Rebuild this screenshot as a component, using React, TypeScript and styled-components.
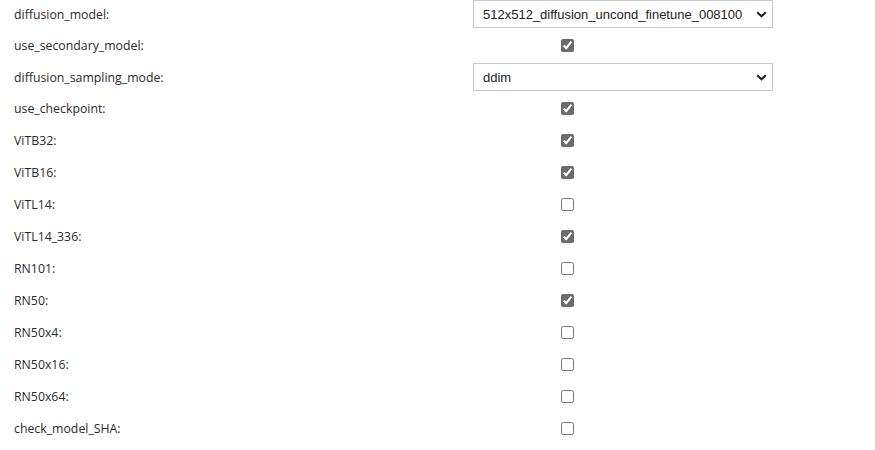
import React from "react";
import styled, { createGlobalStyle } from "styled-components";

const Global = createGlobalStyle`
  html, body { margin: 0; padding: 0; background: #ffffff; }
  body { font-family: "Open Sans", "Noto Sans", sans-serif; }
`;

const Form = styled.div`
  display: grid;
  grid-template-columns: 473px 300px;
  row-gap: 2px;
  padding-left: 14px;
  box-sizing: border-box;
  width: 875px;
`;

const Label = styled.div<{ $h: number }>`
  height: ${(p) => p.$h}px;
  display: flex;
  align-items: center;
  font-family: "Segoe UI", "Open Sans", "Noto Sans", sans-serif;
  font-size: 12.3px;
  color: #2b2b2b;
  padding-top: 1px;
  box-sizing: border-box;
`;

const Cell = styled.div<{ $h: number }>`
  height: ${(p) => p.$h}px;
  display: flex;
  align-items: flex-end;
  margin-left: -14px;
`;

const SelectWrap = styled.div`
  position: relative;
  width: 300px;
  height: 28px;
`;

const Select = styled.select`
  appearance: none;
  -webkit-appearance: none;
  width: 100%;
  height: 100%;
  box-sizing: border-box;
  border: 1px solid #c9c9c9;
  border-radius: 0;
  background: #fff;
  padding: 0 30px 0 9px;
  font-family: "Liberation Sans", Arial, sans-serif;
  font-size: 13px;
  color: #222;
  outline: none;
`;

const Chevron = styled.svg`
  position: absolute;
  right: 6px;
  top: 50%;
  width: 11px;
  height: 7px;
  margin-top: -3px;
  pointer-events: none;
`;

const CheckSlot = styled.div`
  height: 100%;
  display: flex;
  align-items: center;
`;

const Check = styled.input.attrs({ type: "checkbox" })`
  margin: 0 0 0 88px;
  width: 13px;
  height: 13px;
  accent-color: #6b6b6b;
`;

type Row =
  | { label: string; kind: "select"; value: string }
  | { label: string; kind: "check"; checked: boolean };

const rows: Row[] = [
  { label: "diffusion_model:", kind: "select", value: "512x512_diffusion_uncond_finetune_008100" },
  { label: "use_secondary_model:", kind: "check", checked: true },
  { label: "diffusion_sampling_mode:", kind: "select", value: "ddim" },
  { label: "use_checkpoint:", kind: "check", checked: true },
  { label: "ViTB32:", kind: "check", checked: true },
  { label: "ViTB16:", kind: "check", checked: true },
  { label: "ViTL14:", kind: "check", checked: false },
  { label: "ViTL14_336:", kind: "check", checked: true },
  { label: "RN101:", kind: "check", checked: false },
  { label: "RN50:", kind: "check", checked: true },
  { label: "RN50x4:", kind: "check", checked: false },
  { label: "RN50x16:", kind: "check", checked: false },
  { label: "RN50x64:", kind: "check", checked: false },
  { label: "check_model_SHA:", kind: "check", checked: false },
];

export default function App() {
  return (
    <>
      <Global />
      <Form>
        {rows.map((r, i) => {
          const h = r.kind === "select" ? (i === 0 ? 28 : 29) : 30;
          return (
            <React.Fragment key={r.label}>
              <Label $h={h}>{r.label}</Label>
              <Cell $h={h}>
                {r.kind === "select" ? (
                  <SelectWrap>
                    <Select defaultValue={r.value}>
                      <option value={r.value}>{r.value}</option>
                    </Select>
                    <Chevron viewBox="0 0 11 7">
                      <path d="M1.2 1.2 L5.5 5.3 L9.8 1.2" fill="none" stroke="#222" strokeWidth="2" />
                    </Chevron>
                  </SelectWrap>
                ) : (
                  <CheckSlot>
                    <Check defaultChecked={r.checked} />
                  </CheckSlot>
                )}
              </Cell>
            </React.Fragment>
          );
        })}
      </Form>
    </>
  );
}
